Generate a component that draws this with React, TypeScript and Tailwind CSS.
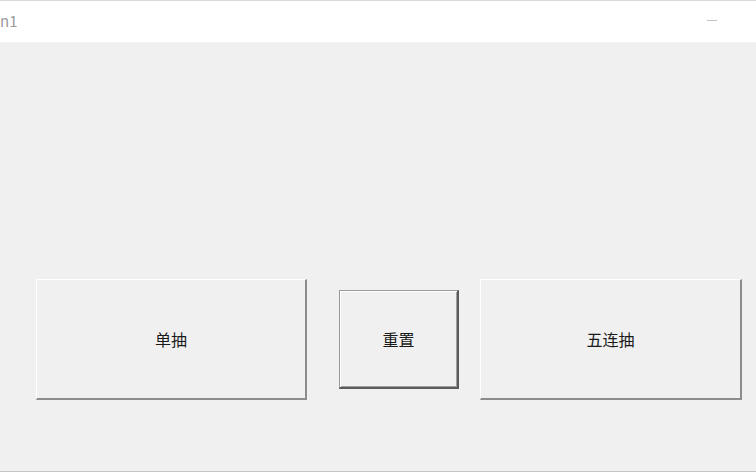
export default function App() {
  return (
    <div
      className="flex h-[472px] w-[756px] flex-col overflow-hidden bg-[#f0f0f0]"
      style={{ fontFamily: '"Noto Sans CJK SC", "Noto Sans", sans-serif' }}
    >
      {/* title bar */}
      <div className="flex h-[42px] shrink-0 items-center justify-between border-t border-[#d8dadc] bg-white pb-[3px] pr-[39px] shadow-[0_1px_0_#f4f4f4]">
        <span className="text-[15px] leading-none text-[#9a9a9a]">n1</span>
        <div className="h-px w-[10px] bg-[#c4c4c4]" />
      </div>

      {/* client area */}
      <div className="flex-1 border-b border-[#c6c6c6] pl-[36px] pt-[237px]">
        <div className="flex items-center">
          <button className="flex h-[121px] w-[271px] items-center justify-center border-l border-t border-b-2 border-r-2 border-l-white border-t-white border-b-[#8c8c8c] border-r-[#8c8c8c] bg-[#f0f0f0] text-[16px] text-[#1a1a1a]">
            单抽
          </button>
          <button className="ml-[32px] flex h-[99px] w-[120px] items-center justify-center border border-b-2 border-r-2 border-l-[#9a9a9a] border-t-[#9a9a9a] border-b-[#5a5a5a] border-r-[#5a5a5a] bg-[#f0f0f0] text-[16px] text-[#1a1a1a] shadow-[inset_1px_1px_0_#ffffff,inset_-1px_-1px_0_#a0a0a0]">
            重置
          </button>
          <button className="ml-[21px] flex h-[121px] w-[262px] items-center justify-center border-l border-t border-b-2 border-r-2 border-l-white border-t-white border-b-[#8c8c8c] border-r-[#8c8c8c] bg-[#f0f0f0] text-[16px] text-[#1a1a1a]">
            五连抽
          </button>
        </div>
      </div>
    </div>
  )
}
